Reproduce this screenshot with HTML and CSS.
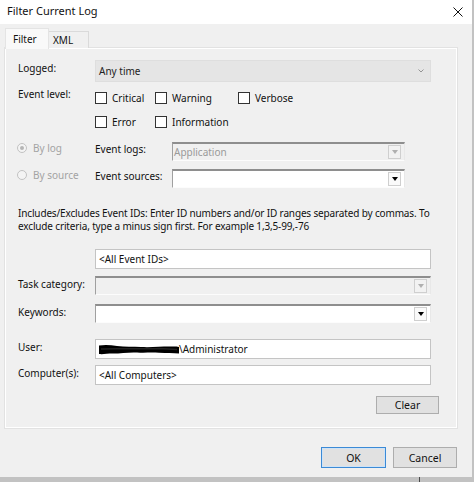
FILE: index.html
```html
<!DOCTYPE html>
<html>
<head>
<meta charset="utf-8">
<link rel="stylesheet" href="styles.css">
</head>
<body>
<div class="window">
  <div class="titlebar">
    <span class="title">Filter Current Log</span>
    <svg class="close" width="10" height="10" viewBox="0 0 10 10"><path d="M0.5 0.5 L9.5 9.5 M9.5 0.5 L0.5 9.5" stroke="#111" stroke-width="1" fill="none"/></svg>
  </div>
  <div class="content">
    <div class="tabs">
      <div class="tab active">Filter</div>
      <div class="tab">XML</div>
    </div>
    <div class="panel">
      <div class="row r-logged">
        <span class="lbl">Logged:</span>
        <div class="flatsel"><span>Any time</span><svg width="6" height="4" viewBox="0 0 6 4"><path d="M0.5 0.5 L3 3 L5.5 0.5" stroke="#8a8a8a" fill="none" stroke-width="0.9"/></svg></div>
      </div>
      <div class="row r-level">
        <span class="lbl lbl-up">Event level:</span>
        <div class="cbgrid">
          <span class="cb"><span class="box"></span>Critical</span>
          <span class="cb"><span class="box"></span>Warning</span>
          <span class="cb"><span class="box"></span>Verbose</span>
          <span class="cb"><span class="box"></span>Error</span>
          <span class="cb"><span class="box"></span>Information</span>
        </div>
      </div>
      <div class="row r-bylog">
        <span class="radio"><span class="dot on"></span>By log</span>
        <span class="lbl2">Event logs:</span>
        <div class="combo disabled small"><span class="ctext">Application</span><span class="ddbtn"><span class="arrow"></span></span></div>
      </div>
      <div class="row r-bysrc">
        <span class="radio"><span class="dot"></span>By source</span>
        <span class="lbl2">Event sources:</span>
        <div class="combo small"><span class="ctext"></span><span class="ddbtn"><span class="arrow"></span></span></div>
      </div>
      <p class="desc">Includes/Excludes Event IDs: Enter ID numbers and/or ID ranges separated by commas. To<br>exclude criteria, type a minus sign first. For example 1,3,5-99,-76</p>
      <div class="row r-ids">
        <span class="lbl"></span>
        <div class="input">&lt;All Event IDs&gt;</div>
      </div>
      <div class="row r-task">
        <span class="lbl">Task category:</span>
        <div class="combo disabled"><span class="ctext"></span><span class="ddbtn"><span class="arrow"></span></span></div>
      </div>
      <div class="row r-kw">
        <span class="lbl">Keywords:</span>
        <div class="combo"><span class="ctext"></span><span class="ddbtn"><span class="arrow"></span></span></div>
      </div>
      <div class="row r-user">
        <span class="lbl">User:</span>
        <div class="input"><svg class="redact" width="80" height="12" viewBox="0 0 80 12"><path d="M0 1.5 C6 0.5 12 1 18 2 C26 3 34 2.5 42 3 C52 3.5 62 2.5 70 2.5 C74 2.6 77 2.2 80 3 L80 9.5 C74 9 68 9.5 60 8.8 C52 8.2 46 9 38 8.5 C30 8 22 9.5 14 9.5 C8 9.5 4 10.5 0 10 Z" fill="#000"/><path d="M2 5 C20 4 40 5.5 60 4.5 L78 5.5" stroke="#222" stroke-width="1.5" fill="none"/></svg><span>\Administrator</span></div>
      </div>
      <div class="row r-comp">
        <span class="lbl">Computer(s):</span>
        <div class="input">&lt;All Computers&gt;</div>
      </div>
      <div class="row r-clear">
        <button class="btn clear">Clear</button>
      </div>
    </div>
    <div class="footer">
      <button class="btn ok">OK</button>
      <button class="btn">Cancel</button>
    </div>
  </div>
</div>
<div class="under"><span class="tick"></span></div>
</body>
</html>
```
FILE: styles.css
```css
* { box-sizing: border-box; }
html, body { margin: 0; padding: 0; }
body {
  width: 474px;
  height: 482px;
  overflow: hidden;
  background: #c2c2c2;
  font-family: "Noto Sans", "Liberation Sans", sans-serif;
  font-size: 10px;
  color: #111;
}
.window {
  width: 472px;
  height: 477px;
  background: #f0f0f0;
  display: flex;
  flex-direction: column;
}
.titlebar {
  height: 24px;
  background: #fff;
  display: flex;
  align-items: center;
  justify-content: space-between;
  padding: 0 9px 3px 7px;
}
.title { font-size: 11px; color: #111; }
.close { display: block; margin-top: 2px; }
.content {
  padding: 4px 15px 0 5px;
  display: flex;
  flex-direction: column;
}
.tabs {
  display: flex;
  align-items: flex-end;
  height: 20px;
  position: relative;
  z-index: 1;
}
.tab {
  height: 17px;
  width: 40px;
  padding-left: 4px;
  line-height: 16px;
  background: #f0f0f0;
  border: 1px solid #dadada;
  border-bottom: none;
  border-left: none;
}
.tab.active {
  height: 21px;
  width: 44px;
  margin-bottom: -1px;
  padding-left: 7px;
  line-height: 20px;
  background: #f9f9f9;
  border: 1px solid #e4e4e4;
  border-bottom: none;
}
.panel {
  height: 380px;
  border: 1px solid #fff;
  outline: 1px solid #e2e2e2;
  outline-offset: 0;
  background: #f0f0f0;
  padding: 11px 25px 0 12px;
  display: flex;
  flex-direction: column;
}
.row { display: flex; align-items: flex-start; }
.lbl { width: 77px; flex: none; line-height: 14px; margin-top: 1px; }
.lbl-up { margin-top: -3px; }
.r-logged { height: 22px; }
.flatsel {
  flex: 1;
  height: 22px;
  background: #e5e5e5;
  border: 1px solid #dedede;
  display: flex;
  align-items: center;
  justify-content: space-between;
  padding: 0 6px 0 3px;
}
.flatsel span { color: #222; }
.r-level { margin-top: 8px; }
.cbgrid {
  display: grid;
  grid-template-columns: 60px 83px auto;
  row-gap: 9px;
}
.cb { display: flex; align-items: center; height: 15px; gap: 5px; }
.box { width: 12px; height: 12px; border: 1px solid #333; background: #fff; flex: none; }
.r-bylog { margin-top: 13px; align-items: center; height: 19px; }
.r-bysrc { margin-top: 8px; align-items: center; height: 19px; }
.radio {
  width: 77px;
  flex: none;
  margin-left: -1px;
  margin-right: 1px;
  display: flex;
  align-items: center;
  gap: 6px;
  color: #a3a3a3;
  padding-bottom: 7px;
}
.dot {
  width: 10px;
  height: 10px;
  border-radius: 50%;
  border: 1px solid #c2c2c2;
  background: #f4f4f4;
  display: flex;
  align-items: center;
  justify-content: center;
}
.dot.on::after {
  content: "";
  width: 4px;
  height: 4px;
  border-radius: 50%;
  background: #b5b5b5;
}
.lbl2 { width: 77px; flex: none; padding-bottom: 5px; }
.combo {
  flex: 1;
  height: 19px;
  background: #fff;
  border-top: 2px solid #8e8e8e;
  border-left: 1px solid #a0a0a0;
  border-right: 1px solid #e8e8e8;
  border-bottom: 1px solid #fcfcfc;
  display: flex;
  align-items: center;
  justify-content: space-between;
}
.combo.small { flex: none; width: 233px; }
.combo.disabled { background: #f0f0f0; }
.ctext { padding-left: 1px; color: #9a9a9a; }
.ddbtn {
  width: 13px;
  height: 14px;
  margin-right: 3px;
  border: 1px solid #cfcfcf;
  background: #f2f2f2;
  display: flex;
  align-items: center;
  justify-content: center;
}
.combo:not(.disabled) .ddbtn { background: #fafafa; }
.arrow {
  width: 0;
  height: 0;
  border-left: 3.5px solid transparent;
  border-right: 3.5px solid transparent;
  border-top: 4px solid #000;
}
.combo.disabled .arrow { border-top-color: #b0b0b0; }
.desc {
  margin: 19px 0 0 0;
  line-height: 13px;
  white-space: nowrap;
  letter-spacing: -0.15px;
}
.r-ids { margin-top: 16px; }
.input {
  flex: 1;
  height: 20px;
  background: #fff;
  border: 1px solid #c4c4c4;
  padding-left: 3px;
  display: flex;
  align-items: center;
}
.r-task { margin-top: 7px; }
.r-kw { margin-top: 9px; }
.r-user { margin-top: 16px; }
.r-comp { margin-top: 6px; }
.redact { display: block; flex: none; margin-top: 1px; }
.r-clear { margin-top: 11px; justify-content: flex-end; margin-right: -8px; }
.btn {
  font-family: inherit;
  font-size: 10.5px;
  color: #111;
  background: #e1e1e1;
  border: 1px solid #adadad;
  width: 63px;
  height: 18px;
  padding: 0;
  margin: 0;
}
.footer {
  margin-top: 19px;
  display: flex;
  justify-content: flex-end;
  gap: 7px;
}
.footer .btn { height: 21px; width: 64px; }
.footer .btn.ok { width: 65px; border: 1px solid #3b8ad6; box-shadow: inset 0 0 0 1px #cfe3f6; }
.under { height: 5px; display: flex; }
.tick { width: 1px; height: 5px; background: #4a4a4a; margin-left: 419px; }
```
